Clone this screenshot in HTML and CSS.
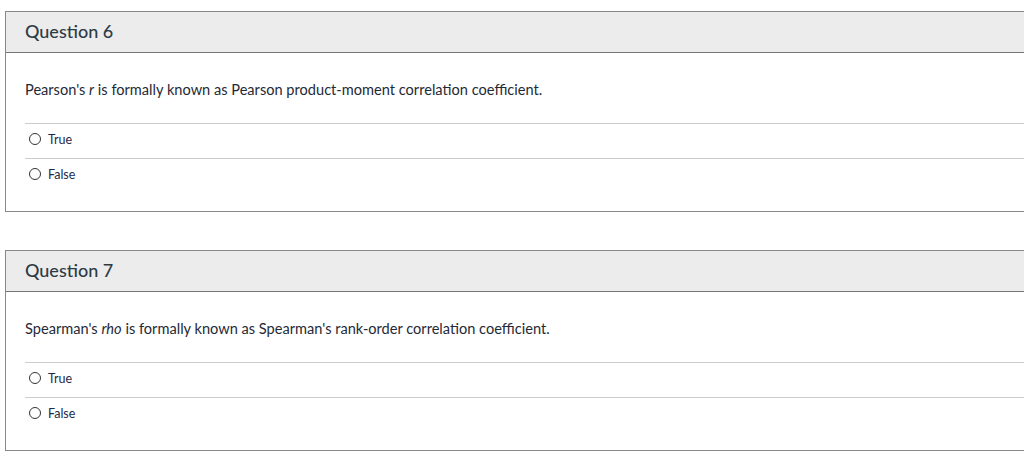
FILE: index.html
```html
<!DOCTYPE html>
<html lang="en">
<head>
    <meta charset="UTF-8">
    <title>Quiz</title>
    <link rel="stylesheet" href="styles.css">
</head>
<body>

    <div class="question">
        <div class="question-header">
            <h2>Question 6</h2>
        </div>
        <div class="question-body">
            <p class="question-text">Pearson's <em>r</em> is formally known as Pearson product-moment correlation coefficient.</p>
            <div class="answers">
                <label class="answer"><span class="radio"></span>True</label>
                <label class="answer"><span class="radio"></span>False</label>
            </div>
        </div>
    </div>

    <div class="question">
        <div class="question-header">
            <h2>Question 7</h2>
        </div>
        <div class="question-body">
            <p class="question-text">Spearman's <em>rho</em> is formally known as Spearman's rank-order correlation coefficient.</p>
            <div class="answers">
                <label class="answer"><span class="radio"></span>True</label>
                <label class="answer"><span class="radio"></span>False</label>
            </div>
        </div>
    </div>

</body>
</html>
```

FILE: styles.css
```css
body {
    font-family: 'Lato', 'Liberation Sans', sans-serif;
    background: #fff;
    color: #2d3b45;
    margin: 0;
    padding: 11px 0 0 5px;
    overflow: hidden;
}

.question {
    width: 1040px;
    border: 1px solid #888;
    border-right: none;
    margin-bottom: 38px;
}

.question-header {
    display: flex;
    align-items: center;
    height: 41px;
    box-sizing: border-box;
    padding: 0 0 2px 19px;
    background: #ececec;
    border-bottom: 1px solid #777;
}

.question-header h2 {
    margin: 0;
    font-size: 18px;
    font-weight: 500;
    color: #2d3b45;
}

.question-body {
    padding: 28px 0 18px 19px;
}

.question-text {
    margin: 0 0 24px;
    font-size: 14.6px;
    line-height: 18px;
    color: #1f2a36;
}

.answers {
    display: flex;
    flex-direction: column;
}

.answer {
    display: flex;
    align-items: center;
    gap: 7px;
    height: 35px;
    box-sizing: border-box;
    padding: 0 0 4px 4px;
    border-top: 1px solid #ccc;
    font-size: 12.5px;
    color: #1f2a48;
}

.radio {
    width: 10px;
    height: 10px;
    border: 1px solid #333;
    border-radius: 50%;
}
```
